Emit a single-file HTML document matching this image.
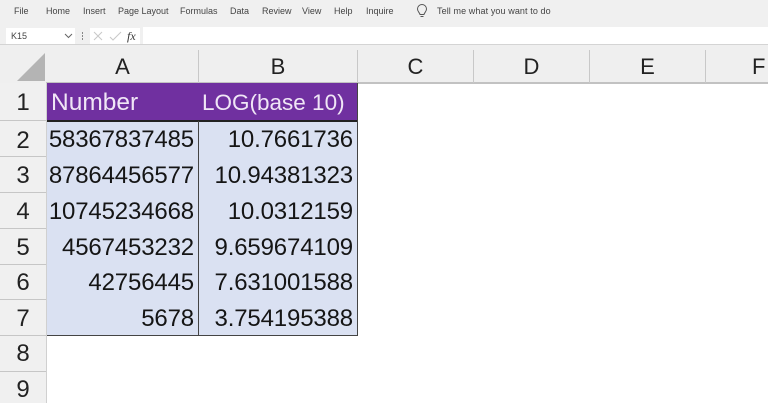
<!DOCTYPE html>
<html><head><meta charset="utf-8"><style>
html,body{margin:0;padding:0;background:#fff}
#p{position:relative;width:768px;height:403px;overflow:hidden;background:#fff;font-family:"Liberation Sans",sans-serif;color:#1a1a1a}
#p div{position:absolute;white-space:nowrap}
.m{top:5px;height:13px;line-height:13px;font-size:9px;color:#444}
.h{top:52px;height:30px;line-height:30px;font-size:22px;text-align:center;color:#222}
.r{left:0;width:46px;text-align:center;font-size:24px;height:36px;line-height:36px;color:#222}
.ln{left:0;width:46px;height:1px;background:#c6c6c6}
.vl{top:50px;width:1px;height:33px;background:#c8c8c8}
.a,.b{font-size:24px;height:36px;line-height:36px;text-align:right;letter-spacing:-.15px;color:#151515}
.a{left:47px;width:147px}
.b{left:199px;width:154px}
</style></head><body><div id="p">
<div style="left:0;top:0;width:768px;height:27px;background:#f0f0f0"></div>
<div style="left:0;top:27px;width:768px;height:18px;background:#f0f0f0"></div>
<div style="left:143px;top:27px;width:625px;height:17px;background:#fff"></div>
<div style="left:0;top:44px;width:768px;height:1px;background:#d4d4d4"></div>
<div style="left:0;top:45px;width:768px;height:38px;background:#efefef"></div>
<div style="left:46px;top:82px;width:722px;height:2px;background:#c2c2c2"></div>
<div style="left:0;top:83px;width:46px;height:320px;background:#f0f0f0"></div>
<div style="left:46px;top:83px;width:1px;height:320px;background:#d0d0d0"></div>

<div class="m" style="left:14px">File</div>
<div class="m" style="left:46px">Home</div>
<div class="m" style="left:83px">Insert</div>
<div class="m" style="left:118px">Page Layout</div>
<div class="m" style="left:180px">Formulas</div>
<div class="m" style="left:230px">Data</div>
<div class="m" style="left:262px">Review</div>
<div class="m" style="left:302px">View</div>
<div class="m" style="left:334px">Help</div>
<div class="m" style="left:366px">Inquire</div>
<div class="m" style="left:437px;letter-spacing:.1px">Tell me what you want to do</div>
<svg style="position:absolute;left:416px;top:4px" width="12" height="15" viewBox="0 0 12 15"><path d="M4 10.500C3.500 8.500 1.500 7.500 1.500 5A4.500 4.500 0 0 1 10.500 5C10.500 7.500 8.500 8.500 8 10.500ZM4.500 12.500H7.500" fill="none" stroke="#555" stroke-width="1"/></svg>

<div style="left:6px;top:28px;width:69px;height:16px;background:#fff"></div>
<div style="left:11px;top:29px;height:14px;line-height:14px;font-size:9px;color:#444">K15</div>
<svg style="position:absolute;left:64px;top:33px" width="9" height="6" viewBox="0 0 9 6"><path d="M1 1L4.500 4.500L8 1" fill="none" stroke="#666" stroke-width="1"/></svg>
<div style="left:82px;top:32px;width:1px;height:1.500px;background:#888"></div>
<div style="left:82px;top:35px;width:1px;height:1.500px;background:#888"></div>
<div style="left:82px;top:38px;width:1px;height:1.500px;background:#888"></div>
<div style="left:90px;top:28px;width:50px;height:16px;background:#fff"></div>
<svg style="position:absolute;left:93px;top:31px" width="30" height="11" viewBox="0 0 30 11"><path d="M1 1L9 9M9 1L1 9M17 6L20 9L28 1" fill="none" stroke="#c8c8c8" stroke-width="1"/></svg>
<div style="left:127px;top:28px;height:16px;line-height:16px;font-size:12px;font-style:italic;font-family:'Liberation Serif',serif;color:#333">fx</div>

<svg style="position:absolute;left:15px;top:51px" width="31" height="31" viewBox="0 0 31 31"><path d="M30 2V30H2Z" fill="#b4b4b4"/></svg>

<div class="h" style="left:47px;width:151px">A</div>
<div class="h" style="left:199px;width:158px">B</div>
<div class="h" style="left:358px;width:115px">C</div>
<div class="h" style="left:474px;width:115px">D</div>
<div class="h" style="left:590px;width:115px">E</div>
<div class="h" style="left:752px;width:20px;text-align:left">F</div>
<div class="vl" style="left:198px"></div>
<div class="vl" style="left:357px"></div>
<div class="vl" style="left:473px"></div>
<div class="vl" style="left:589px"></div>
<div class="vl" style="left:705px"></div>

<div style="left:47px;top:83px;width:310px;height:37px;background:#7030a0"></div>
<div style="left:47px;top:121px;width:310px;height:214px;background:#dae1f2"></div>
<div style="left:47px;top:120px;width:311px;height:1.500px;background:#222"></div>
<div style="left:47px;top:335px;width:311px;height:1px;background:#444"></div>
<div style="left:198px;top:121px;width:1px;height:214px;background:#444"></div>
<div style="left:357px;top:83px;width:1px;height:253px;background:#444"></div>
<div style="left:51px;top:85px;height:36px;line-height:36px;font-size:24.500px;color:#f0e6f6">Number</div>
<div style="left:202px;top:85px;height:36px;line-height:36px;font-size:22.500px;color:#f0e6f6">LOG(base 10)</div>

<div class="ln" style="top:120px"></div><div class="ln" style="top:156px"></div><div class="ln" style="top:192px"></div><div class="ln" style="top:228px"></div><div class="ln" style="top:264px"></div><div class="ln" style="top:299px"></div><div class="ln" style="top:335px"></div><div class="ln" style="top:371px"></div>
<div class="r" style="top:85px">1</div>
<div class="r" style="top:123px">2</div>
<div class="r" style="top:158px">3</div>
<div class="r" style="top:194px">4</div>
<div class="r" style="top:230px">5</div>
<div class="r" style="top:265px">6</div>
<div class="r" style="top:301px">7</div>
<div class="r" style="top:336px">8</div>
<div class="r" style="top:372px">9</div>

<div class="a" style="top:122px">58367837485</div><div class="b" style="top:122px">10.7661736</div>
<div class="a" style="top:158px">87864456577</div><div class="b" style="top:158px">10.94381323</div>
<div class="a" style="top:194px">10745234668</div><div class="b" style="top:194px">10.0312159</div>
<div class="a" style="top:230px">4567453232</div><div class="b" style="top:230px">9.659674109</div>
<div class="a" style="top:265px">42756445</div><div class="b" style="top:265px">7.631001588</div>
<div class="a" style="top:301px">5678</div><div class="b" style="top:301px">3.754195388</div>
</div></body></html>
